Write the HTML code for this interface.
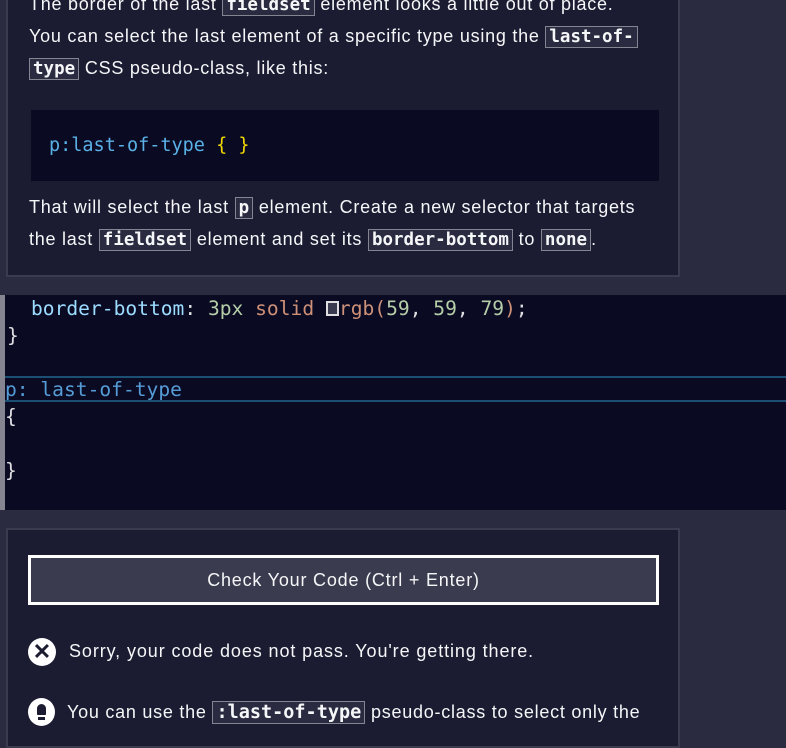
<!DOCTYPE html>
<html><head><style>
body{margin:0;width:786px;height:734px;overflow:hidden;background:#2a2a40;font-family:"Liberation Sans",sans-serif;color:#f5f6f7;position:relative}
.panel{position:absolute;left:6px;width:674px;background:#1b1b32;border:2px solid #3b3b4f;box-sizing:border-box}
.t{position:absolute;left:29px;white-space:nowrap}
p{margin:0;font-size:18px;line-height:32px;letter-spacing:0.75px;white-space:nowrap}
code{font-family:"DejaVu Sans Mono","Liberation Mono",monospace;font-size:17.5px;font-weight:bold;background:#2a2a40;border:1px solid #858591;padding:0 3px;line-height:1;letter-spacing:0}
.cb{position:absolute;left:31px;top:110px;width:628px;height:71px;background:#0a0a23;font-family:"DejaVu Sans Mono","Liberation Mono",monospace;font-size:18.5px;line-height:71px;padding-left:18px;box-sizing:border-box;color:#5ab1e6}
.ed{position:absolute;left:0;top:295px;width:786px;height:215px;background:#0a0a23;font-family:"DejaVu Sans Mono","Liberation Mono",monospace;font-size:19.6px;color:#dfdfe2}
.gut{position:absolute;left:0;top:0;width:5px;height:215px;background:#858591}
.ln{position:absolute;left:7px;white-space:pre;line-height:27px}
</style></head><body>
<div class="panel" style="top:-10px;height:287px"></div>
<div class="t" style="top:-12px">
<p>The border of the last <code>fieldset</code> element looks a little out of place.</p>
<p>You can select the last element of a specific type using the <code>last-of-</code></p>
<p><code>type</code> CSS pseudo-class, like this:</p>
</div>
<div class="cb">p:last-of-type <span style="color:#f1d700">{ }</span></div>
<div class="t" style="top:191px">
<p>That will select the last <code>p</code> element. Create a new selector that targets</p>
<p>the last <code>fieldset</code> element and set its <code>border-bottom</code> to <code>none</code>.</p>
</div>
<div class="ed"><div class="gut"></div>
<div class="ln" style="top:0;left:31px"><span style="color:#9cdcfe">border-bottom</span>: <span style="color:#b5cea8">3px</span> <span style="color:#ce9178">solid</span> <span style="display:inline-block;width:13px;height:15px;border:2px solid #dfdfe2;background:#3b3b4f;vertical-align:-1px;box-sizing:border-box"></span><span style="color:#ce9178">rgb(</span><span style="color:#b5cea8">59</span>, <span style="color:#b5cea8">59</span>, <span style="color:#b5cea8">79</span><span style="color:#ce9178">)</span>;</div>
<div class="ln" style="top:27px">}</div>
<div style="position:absolute;left:5px;top:81px;width:781px;height:26px;border-top:2px solid #1b4f73;border-bottom:2px solid #1b4f73;box-sizing:border-box"></div>
<div class="ln" style="top:81px;left:5px;color:#569cd6">p: last-of-type</div>
<div class="ln" style="top:108px;left:5px">{</div>
<div class="ln" style="top:162px;left:5px">}</div>
</div>
<div class="panel" style="top:528px;height:220px">
<div style="position:absolute;left:20px;top:25px;width:631px;height:50px;border:3px solid #fff;background:#3b3b4f;box-sizing:border-box;text-align:center;line-height:44px;font-size:18px;letter-spacing:0.8px">Check Your Code (Ctrl + Enter)</div>
<div style="position:absolute;left:20px;top:108px;width:28px;height:28px;border-radius:50%;background:#fff;color:#1b1b32;font-weight:bold;font-size:22px;text-align:center;line-height:28px">✕</div>
<p style="position:absolute;left:61px;top:105px;letter-spacing:0.9px">Sorry, your code does not pass. You're getting there.</p>
<div style="position:absolute;left:20px;top:168px;width:27px;height:28px;border-radius:50%;background:#fff"><div style="position:absolute;left:9px;top:6px;width:9px;height:11px;background:#1b1b32;border-radius:5px 5px 1px 1px"></div><div style="position:absolute;left:10px;top:19px;width:7px;height:3px;background:#1b1b32"></div></div>
<p style="position:absolute;left:59px;top:166px">You can use the <code style="font-size:18.5px">:last-of-type</code> pseudo-class to select only the</p>
</div>
</body></html>
